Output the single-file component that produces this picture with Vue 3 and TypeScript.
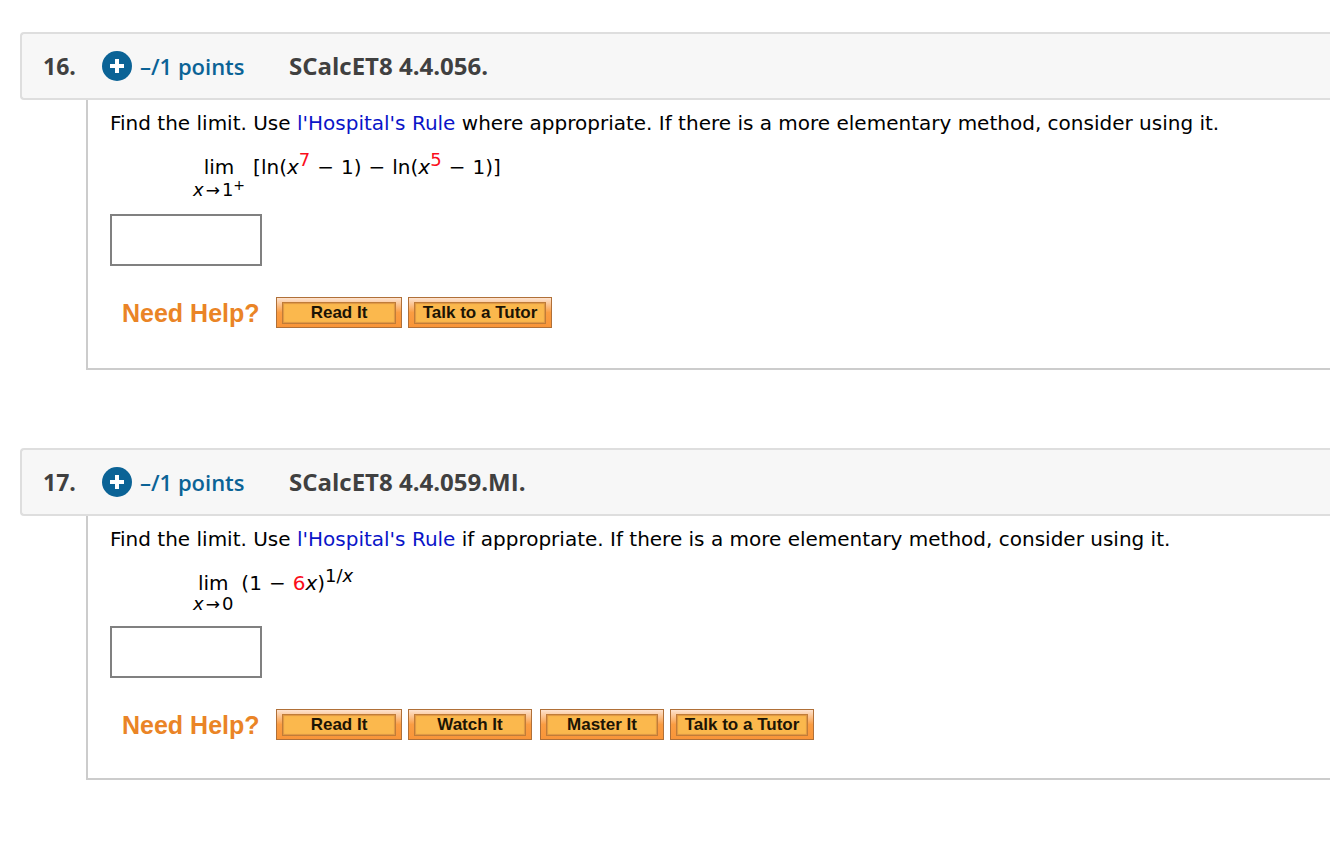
<script setup lang="ts">
interface HelpLink {
  label: string
  size: 'small' | 'medium' | 'large'
}

interface Question {
  number: number
  source: string
  condition: string
  help: HelpLink[]
}

const questions: Question[] = [
  {
    number: 16,
    source: 'SCalcET8 4.4.056.',
    condition: 'where appropriate.',
    help: [
      { label: 'Read It', size: 'medium' },
      { label: 'Talk to a Tutor', size: 'large' },
    ],
  },
  {
    number: 17,
    source: 'SCalcET8 4.4.059.MI.',
    condition: 'if appropriate.',
    help: [
      { label: 'Read It', size: 'medium' },
      { label: 'Watch It', size: 'small' },
      { label: 'Master It', size: 'small' },
      { label: 'Talk to a Tutor', size: 'large' },
    ],
  },
]
</script>

<template>
  <main class="assignment">
    <section v-for="q in questions" :key="q.number" class="question">
      <header class="bar">
        <span class="number">{{ q.number }}.</span>
        <button type="button" class="points">
          <svg class="plus" viewBox="0 0 30 30" aria-hidden="true">
            <circle cx="15" cy="15" r="15" fill="#0b6396" />
            <path d="M15 8v14M8 15h14" stroke="#fff" stroke-width="4" />
          </svg>
          <span>–/1 points</span>
        </button>
        <h2 class="source">{{ q.source }}</h2>
      </header>

      <div class="body">
        <p class="prompt">
          Find the limit. Use <a href="#rule">l'Hospital's Rule</a> {{ q.condition }} If there is a more elementary method, consider using it.
        </p>

        <div v-if="q.number === 16" class="formula">
          <span class="limit">
            <span>lim</span>
            <span class="under one-sided"><i>x</i><span class="arrow">→</span>1<sup class="side">+</sup></span>
          </span>
          <span class="expression">[ln(<i>x</i><sup class="red">7</sup><span class="minus">−</span>1)<span class="minus">−</span>ln(<i>x</i><sup class="red">5</sup><span class="minus">−</span>1)]</span>
        </div>
        <div v-else class="formula">
          <span class="limit">
            <span>lim</span>
            <span class="under"><i>x</i><span class="arrow">→</span>0</span>
          </span>
          <span class="expression">(1<span class="minus">−</span><span class="red">6</span><i>x</i>)<sup>1/<i>x</i></sup></span>
        </div>

        <input class="answer" type="text" :aria-label="`Answer to question ${q.number}`" />

        <div class="help">
          <span class="help-title">Need Help?</span>
          <button v-for="h in q.help" :key="h.label" type="button" class="help-button" :class="h.size">
            <span class="face">{{ h.label }}</span>
          </button>
        </div>
      </div>
    </section>
  </main>
</template>

<style>
body {
  margin: 0;
  background: #fff;
}
</style>

<style scoped>
.assignment {
  padding: 32px 0 0 20px;
  overflow: hidden;
  color: #000;
  font-family: Verdana, "DejaVu Sans", sans-serif;
  font-size: 20px;
  line-height: 24px;
}

.question {
  margin-bottom: 78px;
}

.bar {
  box-sizing: border-box;
  display: flex;
  align-items: center;
  height: 68px;
  padding-left: 21px;
  border: 2px solid #dedede;
  border-right: 0;
  border-radius: 4px 0 0 4px;
  background: #f7f7f7;
  color: #404040;
  font-family: "Open Sans", "Noto Sans", sans-serif;
  font-size: 24px;
  line-height: 32px;
}

.number {
  width: 59px;
  font-size: 23px;
  font-weight: 700;
}

.points {
  display: flex;
  align-items: center;
  gap: 8px;
  width: 187px;
  padding: 0;
  border: 0;
  background: none;
  color: #0b6396;
  font: inherit;
  font-size: 22px;
  font-weight: 600;
  white-space: nowrap;
  cursor: pointer;
}

.plus {
  width: 30px;
  height: 30px;
}

.source {
  margin: 0;
  font-size: 24px;
  font-weight: 700;
}

.body {
  margin-left: 66px;
  padding: 11px 0 40px 22px;
  border-left: 2px solid #ccc;
  border-bottom: 2px solid #ccc;
}

.question:last-child .body {
  padding-bottom: 38px;
}

.prompt {
  margin: 0;
}

.prompt a {
  color: #0a14c8;
  text-decoration: none;
}

.formula {
  display: flex;
  align-items: flex-start;
  gap: 8px;
  margin: 20px 0 13px 83px;
}

.limit {
  display: flex;
  flex-direction: column;
  align-items: center;
}

.under {
  font-size: 18px;
  line-height: 18px;
}

.one-sided {
  line-height: 22px;
}

.arrow {
  margin: 0 2px;
  font-size: 17px;
}

.minus {
  margin: 0 7px;
}

.expression {
  white-space: nowrap;
}

sup {
  font-size: 18px;
  line-height: 0;
  vertical-align: 8px;
}

.side {
  font-size: 14px;
  vertical-align: 6px;
}

.red {
  color: #fb0d1b;
}

.answer {
  box-sizing: border-box;
  display: block;
  width: 152px;
  height: 52px;
  padding: 4px 8px;
  border: 2px solid #808080;
  border-radius: 0;
  background: #fff;
  font: inherit;
}

.help {
  display: flex;
  align-items: center;
  gap: 6px;
  margin-top: 31px;
  padding-left: 12px;
  font-family: "Liberation Sans", Arial, sans-serif;
}

.help-title {
  width: 148px;
  color: #ea8426;
  font-size: 25px;
  font-weight: 700;
}

.help-button {
  box-sizing: border-box;
  height: 31px;
  padding: 4px 5px;
  border: 1px solid #b07038;
  background: linear-gradient(#fde3d0, #fb9d42 50%, #f99539);
  color: #1c1405;
  font-family: inherit;
  font-size: 17px;
  font-weight: 700;
  line-height: 19px;
  white-space: nowrap;
  cursor: pointer;
}

.face {
  box-sizing: border-box;
  display: block;
  height: 22px;
  border: 1px solid #c07c38;
  background: #fbb84d;
  box-shadow: inset 0 0 1px 1px #dd9644;
}

.small {
  width: 124px;
}

.small + .small {
  margin-left: 2px;
}

.medium {
  width: 126px;
}

.large {
  width: 144px;
}
</style>
